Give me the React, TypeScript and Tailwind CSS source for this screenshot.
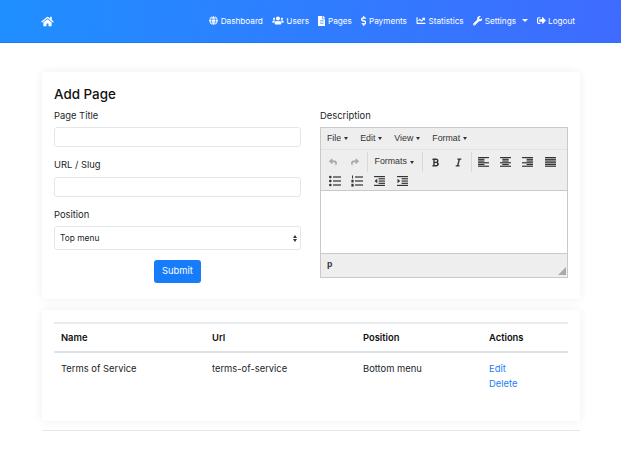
import React from 'react';
import { FaHome, FaGlobe, FaUsers, FaFileAlt, FaDollarSign, FaChartLine, FaWrench, FaSignOutAlt, FaBold, FaItalic, FaReply, FaShare } from 'react-icons/fa';

const links = [
  { label: 'Dashboard', icon: FaGlobe, size: 'h-[9px] w-[9px]' },
  { label: 'Users', icon: FaUsers, size: 'h-[9px] w-[12px]' },
  { label: 'Pages', icon: FaFileAlt, size: 'h-[10px] w-[7.5px]' },
  { label: 'Payments', icon: FaDollarSign, size: 'h-[10px] w-[5.5px]' },
  { label: 'Statistics', icon: FaChartLine, size: 'h-[9px] w-[10px]' },
  { label: 'Settings', icon: FaWrench, size: 'h-[9.5px] w-[9.5px]', caret: true },
  { label: 'Logout', icon: FaSignOutAlt, size: 'h-[9px] w-[9px]' },
];

const Caret = () => <span className="ml-[3px] inline-block h-0 w-0 align-middle border-x-[2.5px] border-t-[3px] border-x-transparent border-t-[#333]" />;

// Alignment and list glyphs in the editor toolbar, drawn as bars on a 12 grid
const Bars = ({ rows }: { rows: [number, number][] }) => (
  <svg width="11" height="10" viewBox="0 0 12 11" fill="#333">
    {rows.map(([x, w], i) => <rect key={i} x={x} y={i * 1.9} width={w} height="1.3" />)}
  </svg>
);

const alignLeft: [number, number][] = [[0, 12], [0, 7], [0, 7], [0, 12], [0, 7], [0, 12]];
const alignCenter: [number, number][] = [[0, 12], [2.5, 7], [2.5, 7], [0, 12], [2.5, 7], [0, 12]];
const alignRight: [number, number][] = [[0, 12], [5, 7], [5, 7], [0, 12], [5, 7], [0, 12]];
const alignFull: [number, number][] = [[0, 12], [0, 12], [0, 12], [0, 12], [0, 12], [0, 12]];

const BulletList = () => (
  <svg width="12" height="12" viewBox="0 0 12 12" fill="#333">
    <circle cx="1.3" cy="2" r="1.3" /><circle cx="1.3" cy="6" r="1.3" /><circle cx="1.3" cy="10" r="1.3" />
    <rect x="4" y="1.4" width="8" height="1.2" /><rect x="4" y="5.4" width="8" height="1.2" /><rect x="4" y="9.4" width="8" height="1.2" />
  </svg>
);

const NumberList = () => (
  <svg width="12" height="12" viewBox="0 0 12 12" fill="#333">
    <rect x="1" y="0.5" width="1" height="3" /><rect x="0.4" y="4.8" width="2.2" height="2.6" /><rect x="0.4" y="8.8" width="2.2" height="2.8" />
    <rect x="4" y="1.4" width="8" height="1.2" /><rect x="4" y="5.4" width="8" height="1.2" /><rect x="4" y="9.4" width="8" height="1.2" />
  </svg>
);

const Indent = ({ flip }: { flip?: boolean }) => (
  <svg width="11" height="10" viewBox="0 0 12 11" fill="#333">
    <rect x="0" y="0" width="12" height="1.3" /><rect x="0" y="9.7" width="12" height="1.3" />
    <rect x="5" y="2.4" width="7" height="1.3" /><rect x="5" y="4.9" width="7" height="1.3" /><rect x="5" y="7.4" width="7" height="1.3" />
    <path d={flip ? 'M0.5 5.5 L3.5 3 V8 Z' : 'M3.5 5.5 L0.5 3 V8 Z'} />
  </svg>
);

const ToolBtn = ({ children }: { children: React.ReactNode }) => (
  <span className="flex h-[20px] w-[22.3px] items-center justify-center">{children}</span>
);

const Sep = ({ className }: { className: string }) => <span className={`h-[20px] w-px bg-[#d9d9d9] ${className}`} />;

const inputClass = 'block w-full rounded-[3px] border border-[#e4e7ea] bg-white';

export default function App() {
  return (
    <div className="h-[464px] w-[621px] overflow-hidden bg-white font-['Inter',sans-serif] text-[9.4px] text-[#212529]">
      <nav className="flex h-[43px] items-center justify-between border-b border-[#1a7cf5] bg-[linear-gradient(100deg,#1f8fff,#3f6bff)] pl-[41px] pr-[46px] text-white">
        <FaHome className="h-[11px] w-[13px]" />
        <div className="flex items-center gap-[9px] text-[8.2px]">
          {links.map(({ label, icon: Icon, size, caret }) => (
            <span key={label} className="flex items-center gap-[2.5px]">
              <Icon className={size} />
              {label}
              {caret && <span className="ml-[3px] h-0 w-0 border-x-[3px] border-t-[3px] border-x-transparent border-t-white" />}
            </span>
          ))}
        </div>
      </nav>

      <div className="ml-[42px] mr-[41px] mt-[29px] h-[227px] rounded-[3px] bg-white px-[12px] pt-[12px] shadow-[0_0_10px_rgba(0,0,0,0.07)]">
        <h1 className="pb-[1px] text-[13.4px] leading-[20px] font-medium text-[#111]">Add Page</h1>
        <div className="grid grid-cols-[247px_248px] gap-x-[19px]">
          <form className="pt-[3px]">
            <label className="block leading-[15px]">Page Title</label>
            <input className={`${inputClass} mt-[4px] h-[20px]`} />
            <label className="mt-[10px] block leading-[15px]">URL / Slug</label>
            <input className={`${inputClass} mt-[5px] h-[20px]`} />
            <label className="mt-[10px] block leading-[15px]">Position</label>
            <div className={`${inputClass} mt-[4px] flex h-[24px] items-center justify-between pl-[5px] pr-[3px] text-[8.4px]`}>
              Top menu
              <span className="flex flex-col gap-[1px]">
                <span className="h-0 w-0 border-x-[2px] border-b-[3px] border-x-transparent border-b-[#333]" />
                <span className="h-0 w-0 border-x-[2px] border-t-[3px] border-x-transparent border-t-[#333]" />
              </span>
            </div>
            <div className="mt-[10px] flex justify-center">
              <button type="button" className="h-[23px] w-[47px] rounded-[3px] bg-[#167cf9] text-white">Submit</button>
            </div>
          </form>

          <div className="pt-[3px]">
            <label className="block leading-[15px]">Description</label>
            <div className="mt-[4px] h-[151px] border border-[#c9c9c9] bg-[#eeeeee] font-['Liberation_Sans',sans-serif] text-[8.8px] text-[#333]">
              <div className="flex h-[22px] items-center gap-[12px] border-b border-[#e2e2e2] pl-[6px]">
                <span>File<Caret /></span>
                <span>Edit<Caret /></span>
                <span>View<Caret /></span>
                <span>Format<Caret /></span>
              </div>
              <div className="h-[41px] border-b border-[#c9c9c9] pl-[1px] pt-[2px]">
                <div className="flex h-[20px] items-center">
                  <ToolBtn><FaReply className="h-[8px] w-[8px] text-[#aaa]" /></ToolBtn>
                  <ToolBtn><FaShare className="h-[8px] w-[8px] text-[#aaa]" /></ToolBtn>
                  <Sep className="mr-[5px]" />
                  <span className="flex w-[47px] items-center pl-[2px]">Formats<Caret /></span>
                  <Sep className="mx-[2px]" />
                  <ToolBtn><FaBold className="h-[9px] w-[9px]" /></ToolBtn>
                  <ToolBtn><FaItalic className="h-[9px] w-[9px]" /></ToolBtn>
                  <Sep className="ml-[2px]" />
                  <ToolBtn><Bars rows={alignLeft} /></ToolBtn>
                  <ToolBtn><Bars rows={alignCenter} /></ToolBtn>
                  <ToolBtn><Bars rows={alignRight} /></ToolBtn>
                  <ToolBtn><Bars rows={alignFull} /></ToolBtn>
                </div>
                <div className="flex h-[18px] items-center pl-[2px]">
                  <ToolBtn><BulletList /></ToolBtn>
                  <ToolBtn><NumberList /></ToolBtn>
                  <ToolBtn><Indent flip /></ToolBtn>
                  <ToolBtn><Indent /></ToolBtn>
                </div>
              </div>
              <div className="h-[63px] border-b border-[#c9c9c9] bg-white" />
              <div className="relative flex h-[22px] items-center pl-[6px] font-bold">
                p
                <svg className="absolute bottom-[1px] right-[1px]" width="8" height="8" viewBox="0 0 8 8" fill="#aaa"><path d="M8 0 V8 H0 Z" /></svg>
              </div>
            </div>
          </div>
        </div>
      </div>

      <div className="ml-[42px] mr-[41px] mt-[11px] h-[111px] rounded-[3px] bg-white px-[12px] pt-[12px] shadow-[0_0_10px_rgba(0,0,0,0.07)]">
        <table className="w-[514px] table-fixed border-t-2 border-[#e9ecef] text-left">
          <colgroup>
            <col className="w-[151px]" /><col className="w-[151px]" /><col className="w-[126px]" /><col />
          </colgroup>
          <thead>
            <tr className="h-[29px] border-b-2 border-[#dee2e6] text-[#111]">
              <th className="pl-[7px] pt-[1px] font-semibold">Name</th>
              <th className="pl-[7px] pt-[1px] font-semibold">Url</th>
              <th className="pl-[7px] pt-[1px] font-semibold">Position</th>
              <th className="pl-[7px] pt-[1px] font-semibold">Actions</th>
            </tr>
          </thead>
          <tbody>
            <tr className="align-top">
              <td className="pl-[7px] pt-[8px] leading-[15px]">Terms of Service</td>
              <td className="pl-[7px] pt-[8px] leading-[15px]">terms-of-service</td>
              <td className="pl-[7px] pt-[8px] leading-[15px]">Bottom menu</td>
              <td className="pl-[7px] pt-[8px] leading-[15px] text-[#1a7dfa]">
                <a className="block">Edit</a>
                <a className="block">Delete</a>
              </td>
            </tr>
          </tbody>
        </table>
      </div>

      <hr className="ml-[42px] mr-[41px] mt-[9px] border-[#e8e8e8]" />
    </div>
  );
}
